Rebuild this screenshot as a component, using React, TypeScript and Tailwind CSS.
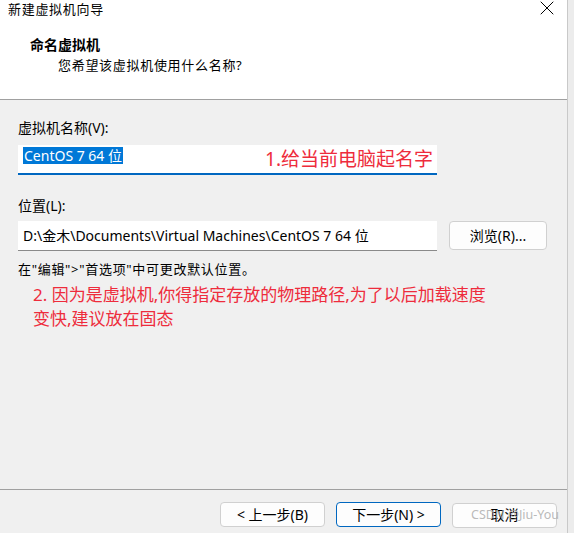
import { X } from "lucide-react";

const font = "font-['Noto_Sans','Noto_Sans_CJK_SC',sans-serif]";

const WizardButton = ({ label, primary }: { label: string; primary?: boolean }) => (
  <button
    className={`h-[25px] w-[105px] rounded-[4px] border bg-[#fdfdfd] text-[14px] leading-none text-black ${
      primary ? "border-[#0067c0]" : "border-[#d0d0d0]"
    }`}
  >
    {label}
  </button>
);

const App = () => {
  return (
    <div className={`flex h-[533px] w-[574px] overflow-hidden bg-[#f0f0f0] text-black ${font}`}>
      <div className="flex w-[568px] flex-col border-r border-[#c9c9c9]">
        {/* header */}
        <div className="h-[100px] shrink-0 border-b border-[#a0a0a0] bg-white">
          <div className="flex items-start justify-between pl-2 pr-[8px]">
            <span className="pt-[1px] text-[13px] tracking-[0.7px] leading-[16px]">新建虚拟机向导</span>
            <X className="-mt-[4px] h-[24px] w-[24px]" strokeWidth={1} />
          </div>
          <div className="mt-[17px] pl-[30px] text-[14px] font-bold leading-[16px]">命名虚拟机</div>
          <div className="mt-[4px] pl-[58px] text-[13px] tracking-[0.7px] leading-[16px]">您希望该虚拟机使用什么名称?</div>
        </div>

        {/* body */}
        <div className="flex-1 px-[18px] pt-[19px]">
          <div className="text-[14px] leading-[18px]">虚拟机名称(V):</div>
          <div className="mt-[8px] flex h-[30px] w-[419px] items-start border-b-2 border-[#0067c0] bg-white pl-[5px] pr-[4px] pt-[2px]">
            <span className="bg-[#0078d7] px-[1px] text-[14px] leading-[17px] text-white">CentOS 7 64 位</span>
            <span className="ml-auto mt-[1px] text-[19px] leading-[22px] text-[#ee2c3c]">1.给当前电脑起名字</span>
          </div>

          <div className="mt-[22px] text-[14px] leading-[18px]">位置(L):</div>
          <div className="mt-[6px] flex items-start">
            <div className="flex h-[30px] w-[419px] items-center border-b border-[#8a8a8a] bg-white pl-[5px] text-[14px]">
              D:\金木\Documents\Virtual Machines\CentOS 7 64 位
            </div>
            <button className="ml-[12px] h-[29px] w-[98px] rounded-[4px] border border-[#d0d0d0] bg-[#fdfdfd] text-[14px] leading-none">
              浏览(R)...
            </button>
          </div>

          <div className="mt-[10px] text-[13px] tracking-[0.7px] leading-[16px]">在"编辑"&gt;"首选项"中可更改默认位置。</div>
          <div className="mt-[6px] pl-[15px] text-[17px] leading-[24px] text-[#ee2c3c]">
            <div>2. 因为是虚拟机,你得指定存放的物理路径,为了以后加载速度</div>
            <div>变快,建议放在固态</div>
          </div>
        </div>

        {/* footer */}
        <div className="h-[44px] shrink-0 border-t border-[#a0a0a0]">
          <div className="flex justify-end gap-[11px] pr-[10px] pt-[12px]">
            <WizardButton label="< 上一步(B)" />
            <WizardButton label="下一步(N) >" primary />
            <div className="relative">
              <WizardButton label="取消" />
              <span className="pointer-events-none absolute left-[19px] top-[4px] whitespace-nowrap text-[12.5px] leading-[18px] text-[#a8a8a8]/80">
                CSDN @Jiu-You
              </span>
            </div>
          </div>
        </div>
      </div>
      <div className="flex-1 bg-[#ececec]" />
    </div>
  );
};

export default App;
